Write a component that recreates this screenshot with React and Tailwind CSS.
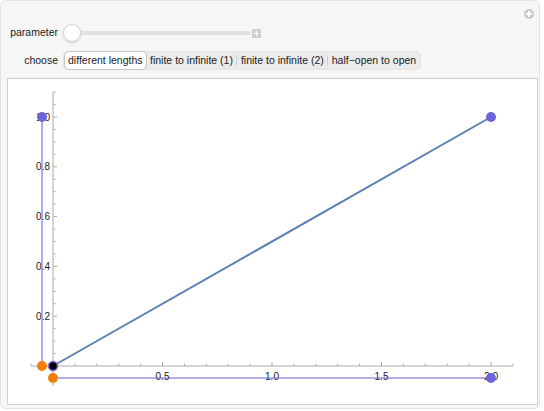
import { useState } from "react"

const X0 = 52
const XS = 219
const Y0 = 365
const YS = 249

const px = (x) => X0 + x * XS
const py = (y) => Y0 - y * YS

const options = ["different lengths", "finite to infinite (1)", "finite to infinite (2)", "half\u2212open to open"]

const Plot = () => {
  const xTicks = []
  for (let i = -1; i <= 21; i++) {
    if (i === 0) continue
    const major = i % 5 === 0
    xTicks.push(
      <line key={"x" + i} x1={px(i / 10)} x2={px(i / 10)} y1={Y0} y2={Y0 - (major ? 4 : 2.5)} stroke="#aaa" strokeWidth="1" />
    )
  }
  const yTicks = []
  for (let i = -1; i <= 22; i++) {
    if (i === 0) continue
    const major = i % 4 === 0
    yTicks.push(
      <line key={"y" + i} x1={X0} x2={X0 + (major ? 4 : 2.5)} y1={py(i / 20)} y2={py(i / 20)} stroke="#aaa" strokeWidth="1" />
    )
  }

  return (
    <svg width="530" height="326" viewBox="7 78 530 326" style={{ fontFamily: "'Liberation Sans', Arial, sans-serif" }}>
      <line x1={px(-0.1)} x2={px(2.1)} y1={Y0} y2={Y0} stroke="#aaa" strokeWidth="1" />
      <line x1={X0} x2={X0} y1={py(-0.08)} y2={py(1.1)} stroke="#aaa" strokeWidth="1" />
      {xTicks}
      {yTicks}
      {["0.5", "1.0", "1.5", "2.0"].map((t) => (
        <text key={t} x={px(parseFloat(t))} y={Y0 + 14} fontSize="10" textAnchor="middle" fill="#222">
          {t}
        </text>
      ))}
      {["0.2", "0.4", "0.6", "0.8", "1.0"].map((t) => (
        <text key={t} x={X0 - 3} y={py(parseFloat(t)) + 3.5} fontSize="10" textAnchor="end" fill="#222">
          {t}
        </text>
      ))}
      <line x1={41} x2={41} y1={py(1)} y2={Y0} stroke="#6a5acd" strokeWidth="1" />
      <line x1={X0} x2={px(2)} y1={377} y2={377} stroke="#6a5acd" strokeWidth="1" />
      <line x1={X0} x2={px(2)} y1={Y0} y2={py(1)} stroke="#5e81b5" strokeWidth="2" />
      <circle cx={41} cy={py(1)} r="5" fill="#6f63d9" />
      <circle cx={px(2)} cy={py(1)} r="5" fill="#6f63d9" />
      <circle cx={px(2)} cy={377} r="5" fill="#6f63d9" />
      <circle cx={41} cy={Y0} r="5" fill="#f27f0c" />
      <circle cx={X0} cy={377} r="5" fill="#f27f0c" />
      <circle cx={X0} cy={Y0} r="4.5" fill="#000" stroke="#7a6ee0" strokeWidth="1.5" />
    </svg>
  )
}

const App = () => {
  const [choice, setChoice] = useState(0)

  return (
    <div className="w-[544px] h-[411px] bg-white" style={{ fontFamily: "'Liberation Sans', Arial, sans-serif" }}>
      <div className="relative w-[540px] h-[409px] bg-[#f6f6f6] border border-[#e2e2e2] rounded-md">
        <div className="absolute right-[5px] top-[8px] w-[10px] h-[10px] rounded-full bg-[#c9c9c9] flex items-center justify-center">
          <span className="block w-[6px] h-[1.5px] bg-white absolute"></span>
          <span className="block w-[1.5px] h-[6px] bg-white absolute"></span>
        </div>

        <div className="pt-[23px] flex flex-col gap-[9px]">
          <div className="flex items-center h-[18px]">
            <div className="w-[57px] text-right text-[10.5px] text-[#222]">parameter</div>
            <div className="ml-[5px] relative w-[188px] h-[18px] flex items-center">
              <div className="w-full h-[4px] rounded-full bg-[#e1e1e1]"></div>
              <div className="absolute left-0 top-0 w-[18px] h-[18px] rounded-full bg-white border border-[#d6d6d6] shadow-sm"></div>
            </div>
            <div className="ml-[1px] w-[9px] h-[9px] bg-[#cfcfcf] rounded-[1px] relative flex items-center justify-center">
              <span className="block w-[5px] h-[1px] bg-white absolute"></span>
              <span className="block w-[1px] h-[5px] bg-white absolute"></span>
            </div>
          </div>

          <div className="flex items-center h-[19px]">
            <div className="w-[57px] text-right text-[10.5px] text-[#222]">choose</div>
            <div className="ml-[5px] flex items-center h-[19px] bg-[#ebebeb] border border-[#e2e2e2] rounded-[5px]">
              {options.map((o, i) => (
                <div key={o} className="flex items-center h-full">
                  {i > 0 && i !== choice && i - 1 !== choice && <span className="w-px h-[11px] bg-[#cfcfcf]"></span>}
                  <button
                    onClick={() => setChoice(i)}
                    className={
                      i === choice
                        ? "h-[19px] -my-px px-[3px] bg-white border border-[#c4c4c4] rounded-[5px] text-[10.5px] text-[#222]"
                        : "h-full px-[3.5px] text-[10.5px] text-[#222]"
                    }
                  >
                    {o}
                  </button>
                </div>
              ))}
            </div>
          </div>
        </div>

        <div className="absolute left-[6px] top-[77px] w-[531px] h-[327px] bg-white border border-[#cfcfcf]">
          <Plot />
        </div>
      </div>
    </div>
  )
}

export default App
